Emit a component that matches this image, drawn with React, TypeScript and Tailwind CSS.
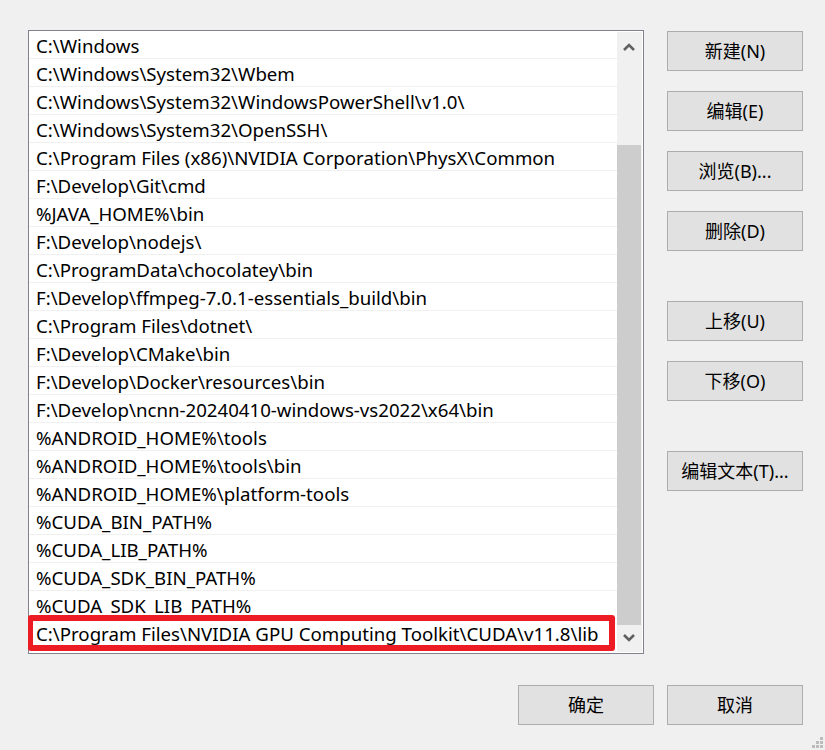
const rows = [
  "C:\\Windows",
  "C:\\Windows\\System32\\Wbem",
  "C:\\Windows\\System32\\WindowsPowerShell\\v1.0\\",
  "C:\\Windows\\System32\\OpenSSH\\",
  "C:\\Program Files (x86)\\NVIDIA Corporation\\PhysX\\Common",
  "F:\\Develop\\Git\\cmd",
  "%JAVA_HOME%\\bin",
  "F:\\Develop\\nodejs\\",
  "C:\\ProgramData\\chocolatey\\bin",
  "F:\\Develop\\ffmpeg-7.0.1-essentials_build\\bin",
  "C:\\Program Files\\dotnet\\",
  "F:\\Develop\\CMake\\bin",
  "F:\\Develop\\Docker\\resources\\bin",
  "F:\\Develop\\ncnn-20240410-windows-vs2022\\x64\\bin",
  "%ANDROID_HOME%\\tools",
  "%ANDROID_HOME%\\tools\\bin",
  "%ANDROID_HOME%\\platform-tools",
  "%CUDA_BIN_PATH%",
  "%CUDA_LIB_PATH%",
  "%CUDA_SDK_BIN_PATH%",
  "%CUDA_SDK_LIB_PATH%",
  "C:\\Program Files\\NVIDIA GPU Computing Toolkit\\CUDA\\v11.8\\lib",
];

function Btn({ label, className = "" }: { label: string; className?: string }) {
  return (
    <button className={`w-[136px] h-[40px] shrink-0 bg-[#e1e1e1] border border-[#adadad] text-[18px] text-black flex items-center justify-center ${className}`}>
      {label}
    </button>
  );
}

export default function App() {
  return (
    <div
      className="w-[825px] h-[750px] bg-[#f0f0f0] relative overflow-hidden text-black"
      style={{ fontFamily: '"Noto Sans", "Noto Sans CJK SC", sans-serif' }}
    >
      <div className="flex pt-[30px] pl-[28px]">
        <div className="relative w-[616px] h-[624px] border border-[#82828f] bg-white flex">
          <div className="w-[588px] flex flex-col">
            {rows.map((r, i) => (
              <div
                key={i}
                className={`h-[28px] shrink-0 pl-[7px] flex items-center text-[18.67px] leading-[28px] whitespace-nowrap ${i < rows.length - 1 ? "border-b border-[#f0f0f0] pt-[3px]" : "pt-[1px]"}`}
              >
                {r}
              </div>
            ))}
          </div>
          <div className="w-[25px] bg-[#f0f0f0] flex flex-col mt-[1px] mb-[1px]">
            <div className="h-[27px] w-[24px] flex items-start justify-center shrink-0 pt-[11px]">
              <svg width="12" height="8" viewBox="0 0 12 8">
                <path d="M1 7 L6 2 L11 7" fill="none" stroke="#606060" strokeWidth="2.6" />
              </svg>
            </div>
            <div className="h-[86px]" />
            <div className="w-[24px] h-[481px] bg-[#cdcdcd]" />
            <div className="h-[27px] w-[24px] flex items-start justify-center pt-[9px]">
              <svg width="12" height="8" viewBox="0 0 12 8">
                <path d="M1 1 L6 6 L11 1" fill="none" stroke="#606060" strokeWidth="2.6" />
              </svg>
            </div>
          </div>
          <div className="absolute left-[-1px] top-[584px] w-[587px] h-[36px] border-[6px] border-l-[5px] border-[#ed1c24] rounded-[3px]" />
        </div>
        <div className="flex flex-col ml-[23px] pt-[1px]">
          <Btn label="新建(N)" />
          <Btn label="编辑(E)" className="mt-[20px]" />
          <Btn label="浏览(B)..." className="mt-[20px]" />
          <Btn label="删除(D)" className="mt-[20px]" />
          <Btn label="上移(U)" className="mt-[50px]" />
          <Btn label="下移(O)" className="mt-[20px]" />
          <Btn label="编辑文本(T)..." className="mt-[50px]" />
        </div>
      </div>
      <div className="flex justify-end gap-[13px] pr-[22px] pt-[31px]">
        <Btn label="确定" />
        <Btn label="取消" />
      </div>
      <div className="absolute right-[1px] bottom-[1px]">
        <svg width="12" height="12" viewBox="0 0 12 12" fill="#bcbcbc">
          <rect x="8" y="0" width="3" height="3" />
          <rect x="4" y="4" width="3" height="3" />
          <rect x="8" y="4" width="3" height="3" />
          <rect x="0" y="8" width="3" height="3" />
          <rect x="4" y="8" width="3" height="3" />
          <rect x="8" y="8" width="3" height="3" />
        </svg>
      </div>
    </div>
  );
}
